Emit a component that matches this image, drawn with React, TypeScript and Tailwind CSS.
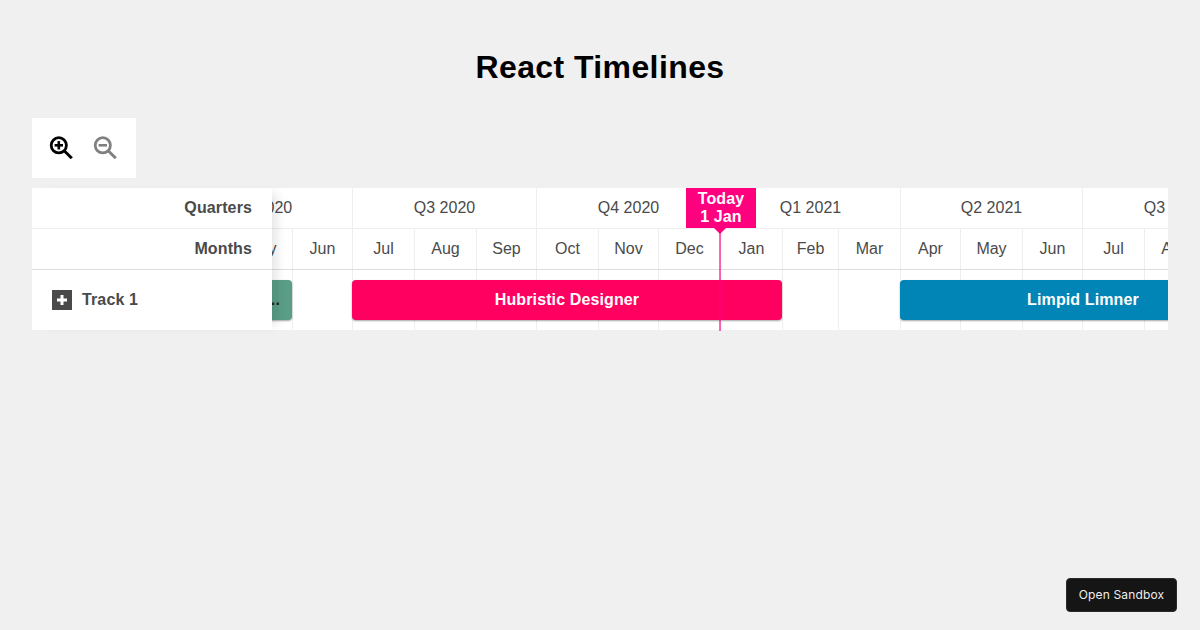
const quarters = [
  { label: 'Q2 2020', days: 91 },
  { label: 'Q3 2020', days: 92 },
  { label: 'Q4 2020', days: 92 },
  { label: 'Q1 2021', days: 90 },
  { label: 'Q2 2021', days: 91 },
  { label: 'Q3 2021', days: 92 },
];

const months = [
  { label: 'Apr', days: 30 },
  { label: 'May', days: 31 },
  { label: 'Jun', days: 30 },
  { label: 'Jul', days: 31 },
  { label: 'Aug', days: 31 },
  { label: 'Sep', days: 30 },
  { label: 'Oct', days: 31 },
  { label: 'Nov', days: 30 },
  { label: 'Dec', days: 31 },
  { label: 'Jan', days: 31 },
  { label: 'Feb', days: 28 },
  { label: 'Mar', days: 31 },
  { label: 'Apr', days: 30 },
  { label: 'May', days: 31 },
  { label: 'Jun', days: 30 },
  { label: 'Jul', days: 31 },
  { label: 'Aug', days: 31 },
  { label: 'Sep', days: 30 },
];

const PX_PER_DAY = 2;

const bars = [
  { title: 'Jejune J...', start: 0, days: 61, color: '#5a9e87', text: '#222', end: true },
  { title: 'Hubristic Designer', start: 91, days: 215, color: '#ff0060', text: '#fff', end: false },
  { title: 'Limpid Limner', start: 365, days: 183, color: '#0085b6', text: '#fff', end: false },
];

function ZoomIcon({ plus, color }: { plus: boolean; color: string }) {
  return (
    <svg width="24" height="24" viewBox="0 0 24 24" fill="none" stroke={color} strokeWidth="2.8">
      <circle cx="9.8" cy="10.3" r="7.6" />
      <path d="M15.2 15.7L22.8 23.2" strokeWidth="3" />
      <path d="M5.6 10.3h8.4" strokeWidth="2.6" />
      {plus && <path d="M9.8 6.1v8.4" strokeWidth="2.6" />}
    </svg>
  );
}

export default function App() {
  return (
    <div className="min-h-screen bg-[#f0f0f0] px-8 text-[#4a4a4a]" style={{ fontFamily: '"Liberation Sans", Arial, sans-serif' }}>
      <h1 className="h-[118px] pt-[48px] text-center text-[32px] leading-[38px] font-bold tracking-[0.4px] text-black">React Timelines</h1>

      <div className="mb-[10px] flex h-[60px] w-[104px] items-center gap-5 bg-white pb-[2px] pl-[17px]">
        <button><ZoomIcon plus color="#000" /></button>
        <button><ZoomIcon plus={false} color="#808080" /></button>
      </div>

      <div className="flex h-[142px] bg-white">
        <div className="relative z-10 w-[240px] shrink-0 bg-white font-bold tracking-[0.12px] shadow-[10px_0_10px_-5px_rgba(0,0,0,0.1)]">
          <div className="flex h-[41px] items-center justify-end border-b border-[#eee] pr-5">Quarters</div>
          <div className="flex h-[41px] items-center justify-end border-b border-[#ddd] pr-5">Months</div>
          <div className="flex h-[60px] items-center pl-5">
            <span className="mr-[10px] flex h-5 w-5 items-center justify-center bg-[#4a4a4a]">
              <svg width="10" height="10" viewBox="0 0 10 10" fill="#fff">
                <path d="M3.5 0h3v3.5H10v3H6.5V10h-3V6.5H0v-3h3.5z" />
              </svg>
            </span>
            Track 1
          </div>
        </div>

        <div className="relative min-w-0 flex-1 overflow-x-clip">
          <div className="relative ml-[-102px] w-[1300px]">
            <div className="flex h-[41px] border-b border-[#eee]">
              {quarters.map(q => (
                <div
                  key={q.label}
                  className="flex shrink-0 items-center justify-center border-l border-[#eee]"
                  style={{ width: q.days * PX_PER_DAY }}
                >
                  {q.label}
                </div>
              ))}
            </div>
            <div className="flex h-[41px] border-b border-[#ddd]">
              {months.map((m, idx) => (
                <div
                  key={idx}
                  className="flex shrink-0 items-center justify-center border-l border-[#eee]"
                  style={{ width: m.days * PX_PER_DAY }}
                >
                  {m.label}
                </div>
              ))}
            </div>
            <div className="relative flex h-[60px]">
              {months.map((m, idx) => (
                <div key={idx} className="shrink-0 border-l border-[#eee]" style={{ width: m.days * PX_PER_DAY }} />
              ))}
              {bars.map(b => (
                <div
                  key={b.title}
                  className={`absolute top-[10px] flex h-10 items-center rounded-[4px] px-3 font-bold tracking-[0.12px] shadow-[0_1px_2px_rgba(0,0,0,0.35)] ${b.end ? 'justify-end' : 'justify-center'}`}
                  style={{ left: b.start * PX_PER_DAY, width: b.days * PX_PER_DAY, background: b.color, color: b.text }}
                >
                  <span className="whitespace-nowrap">{b.title}</span>
                </div>
              ))}
            </div>

            <div className="absolute top-[41px] left-[549px] h-[102px] w-[2px] bg-[#ff0080]/60" />
            <div className="absolute top-0 left-[516px] flex h-10 w-[70px] flex-col items-center justify-center bg-[#ff007f] text-center leading-[18px] font-bold tracking-[0.12px] text-white">
              <span>Today</span>
              <span>1 Jan</span>
            </div>
            <div className="absolute top-10 left-[544px] h-0 w-0 border-x-[6px] border-t-[6px] border-x-transparent border-t-[#ff007f]" />
          </div>
        </div>
      </div>

      <button
        className="fixed right-[23px] bottom-[18px] h-[34px] w-[111px] rounded-[4px] border border-[#2a2a2a] bg-[#151515] text-xs tracking-[0.15px] text-[#eee]"
        style={{ fontFamily: 'Inter, sans-serif' }}
      >
        Open Sandbox
      </button>
    </div>
  );
}
